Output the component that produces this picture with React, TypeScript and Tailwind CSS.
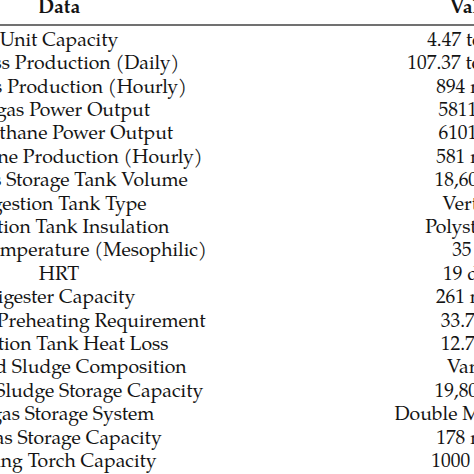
import React from "react";

const rows: [string, string][] = [
  ["Unit Capacity", "4.47 tons/h"],
  ["Biomass Production (Daily)", "107.37 tons/day"],
  ["Biomass Production (Hourly)", "894 m³/h"],
  ["Biogas Power Output", "5811 kW"],
  ["Biomethane Power Output", "6101 kW"],
  ["Biomethane Production (Hourly)", "581 m³/h"],
  ["Biomass Storage Tank Volume", "18,600 m³"],
  ["Digestion Tank Type", "Vertical"],
  ["Digestion Tank Insulation", "Polystyrene"],
  ["Process Temperature (Mesophilic)", "35 °C"],
  ["HRT", "19 days"],
  ["Digester Capacity", "261 m³/d"],
  ["Substrate Preheating Requirement", "33.7 kW"],
  ["Digestion Tank Heat Loss", "12.7 kW"],
  ["Digested Sludge Composition", "Varied"],
  ["Digested Sludge Storage Capacity", "19,800 m³"],
  ["Biogas Storage System", "Double Membrane"],
  ["Biogas Storage Capacity", "178 m³/h"],
  ["Flaring Torch Capacity", "1000 m³/h"],
];

const font = {
  fontFamily:
    '"Palatino Linotype", Palatino, "P052", "TeX Gyre Pagella", "URW Palladio L", "Book Antiqua", "Liberation Serif", serif',
};

export default function App() {
  return (
    <div
      className="w-[474px] h-[474px] overflow-hidden bg-white text-[#141414] text-[19.4px] leading-[23.4px]"
      style={font}
    >
      <div className="w-[525px] -mt-[3.4px]">
        <div className="grid grid-cols-[118px_307px_100px] font-bold pb-[4px]">
          <div className="flex justify-center">
            <span className="whitespace-nowrap">Data</span>
          </div>
          <div />
          <div className="flex justify-center">
            <span className="whitespace-nowrap">Value</span>
          </div>
        </div>
        <div className="h-[1.5px] bg-[#717171]" />
        <div className="pt-[4.2px]">
          {rows.map(([label, value]) => (
            <div key={label} className="grid grid-cols-[118px_307px_100px]">
              <div className="flex justify-center">
                <span className="whitespace-nowrap">{label}</span>
              </div>
              <div />
              <div className="flex justify-center">
                <span className="whitespace-nowrap">{value}</span>
              </div>
            </div>
          ))}
        </div>
      </div>
    </div>
  );
}
